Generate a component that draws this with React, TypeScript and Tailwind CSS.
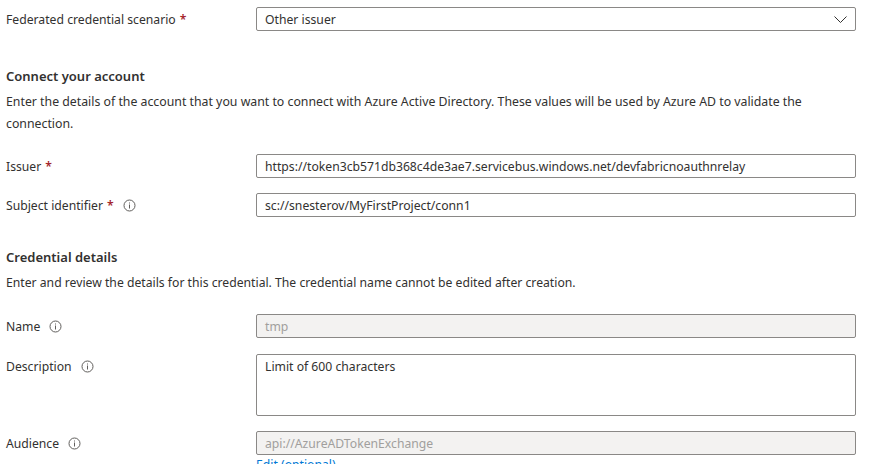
function InfoIcon() {
  return (
    <svg width="13" height="13" viewBox="0 0 13 13" fill="none" className="shrink-0">
      <circle cx="6.5" cy="6.5" r="5.5" stroke="#605e5c" strokeWidth="1" />
      <rect x="6" y="5.5" width="1" height="4" fill="#605e5c" />
      <rect x="6" y="3.5" width="1" height="1" fill="#605e5c" />
    </svg>
  );
}

function Row({ label, required, info, children, className }: { label: string; required?: boolean; info?: boolean; children: React.ReactNode; className?: string }) {
  return (
    <div className={`flex items-start ${className ?? ''}`}>
      <div className="w-[250px] h-[24px] pt-[2px] flex items-center shrink-0">
        <span>{label}</span>
        {required && <span className="ml-[4px] font-semibold text-[#a4262c]">*</span>}
        {info && <span className="flex ml-[9px] -mt-[1px]"><InfoIcon /></span>}
      </div>
      {children}
    </div>
  );
}

function Field({ value, disabled }: { value: string; disabled?: boolean }) {
  return (
    <div className={`w-[600px] h-[24px] border rounded-[2px] px-[8px] pt-[2px] flex items-center border-[#8a8886] ${disabled ? 'bg-[#f3f2f1] text-[#a19f9d]' : 'bg-white text-[#323130]'}`}>
      {value}
    </div>
  );
}

export default function App() {
  return (
    <div className="h-[464px] w-[871px] overflow-hidden bg-white pl-[6px] pt-[7px] text-[12.2px] text-[#323130] font-['Noto_Sans','Open_Sans',sans-serif]">
      <Row label="Federated credential scenario" required>
        <div className="w-[600px] h-[24px] border border-[#8a8886] rounded-[2px] pl-[8px] pr-[8px] flex items-center justify-between">
          <span className="pt-[2px]">Other issuer</span>
          <svg width="13" height="7" viewBox="0 0 13 7" fill="none" className="mt-[1px]">
            <path d="M0.5 0.5 L6.5 6.5 L12.5 0.5" stroke="#323130" strokeWidth="1" />
          </svg>
        </div>
      </Row>

      <h2 className="mt-[34px] h-[22px] leading-[22px] text-[13px] font-semibold">Connect your account</h2>
      <p className="mt-[4px] w-[840px] leading-[22px] text-[12.3px]">
        Enter the details of the account that you want to connect with Azure Active Directory. These values will be used by Azure AD to validate the connection.
      </p>

      <Row label="Issuer" required className="mt-[19px]">
        <Field value="https://token3cb571db368c4de3ae7.servicebus.windows.net/devfabricnoauthnrelay" />
      </Row>
      <Row label="Subject identifier" required info className="mt-[15px]">
        <Field value="sc://snesterov/MyFirstProject/conn1" />
      </Row>

      <h2 className="mt-[29px] h-[22px] leading-[22px] text-[13px] font-semibold">Credential details</h2>
      <p className="mt-[4px] leading-[22px]">
        Enter and review the details for this credential. The credential name cannot be edited after creation.
      </p>

      <Row label="Name" info className="mt-[20px]">
        <Field value="tmp" disabled />
      </Row>
      <Row label="Description" info className="mt-[16px]">
        <div className="w-[600px] h-[62px] border border-[#8a8886] rounded-[2px] px-[8px] pt-[3px]">Limit of 600 characters</div>
      </Row>
      <Row label="Audience" info className="mt-[15px]">
        <div>
          <Field value="api://AzureADTokenExchange" disabled />
          <a className="block mt-[2px] leading-[16px] text-[#0078d4]">Edit (optional)</a>
        </div>
      </Row>
    </div>
  );
}
